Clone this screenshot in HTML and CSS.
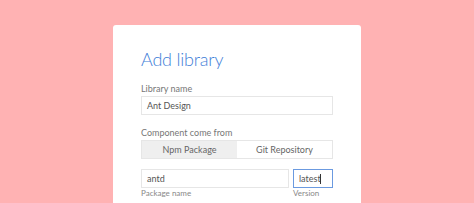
FILE: index.html
```html
<!DOCTYPE html>
<html>
<head>
<link rel="stylesheet" href="styles.css">
</head>
<body>
<div class="card">
  <h1>Add library</h1>
  <div class="field-label">Library name</div>
  <div class="input">Ant Design</div>
  <div class="field-label">Component come from</div>
  <div class="segment">
    <div class="seg-item active">Npm Package</div>
    <div class="seg-item">Git Repository</div>
  </div>
  <div class="pkg-row">
    <div class="pkg-col pkg-name">
      <div class="input">antd</div>
      <div class="hint">Package name</div>
    </div>
    <div class="pkg-col pkg-version">
      <div class="input focused">latest<span class="caret"></span></div>
      <div class="hint">Version</div>
    </div>
  </div>
</div>
</body>
</html>
```

FILE: styles.css
```css
* {
  box-sizing: border-box;
}

body {
  margin: 0;
  background-color: #ffb2b3;
  font-family: Lato, "Open Sans", sans-serif;
  overflow: hidden;
}

.card {
  width: 248px;
  height: 178px;
  margin: 25px 0 0 113px;
  padding: 22px 28px 0;
  background-color: #fff;
  border-radius: 3px 3px 0 0;
}

h1 {
  margin: 0;
  font-size: 18px;
  font-weight: 300;
  line-height: 24px;
  letter-spacing: -0.2px;
  color: #3f80d8;
}

.field-label {
  margin-top: 12px;
  margin-bottom: 1px;
  font-size: 9px;
  line-height: 12px;
  color: #777;
}

.field-label + .input {
  margin-bottom: 10px;
}

.input {
  height: 19px;
  padding: 0 5px;
  border: 1px solid #e6e6e6;
  font-size: 9px;
  line-height: 17px;
  color: #555;
}

.input.focused {
  border-color: #6b9ae0;
}

.caret {
  display: inline-block;
  width: 1px;
  height: 10px;
  margin-left: -1px;
  vertical-align: -2px;
  background-color: #333;
}

.segment {
  display: flex;
  height: 19px;
  border: 1px solid #e6e6e6;
}

.seg-item {
  flex: 1;
  text-align: center;
  font-size: 9px;
  line-height: 17px;
  color: #666;
}

.seg-item.active {
  background-color: #efefef;
}

.pkg-row {
  display: flex;
  gap: 4px;
  margin-top: 10px;
}

.pkg-name {
  width: 148px;
}

.pkg-version {
  flex: 1;
}

.hint {
  font-size: 8px;
  line-height: 10px;
  color: #888;
}
```
